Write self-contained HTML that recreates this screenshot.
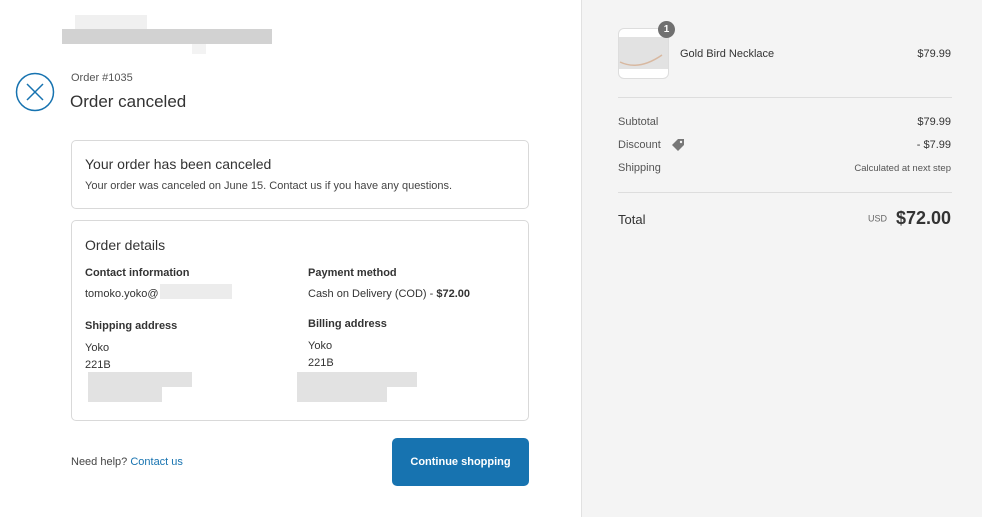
<!DOCTYPE html>
<html><head><meta charset="utf-8"><style>
*{margin:0;padding:0;box-sizing:border-box}
body{width:982px;height:517px;overflow:hidden;background:#fff;font-family:"Liberation Sans",sans-serif;color:#333;position:relative}
.a{position:absolute;white-space:nowrap}
.s{font-size:11px}
.b{font-weight:600}
.box{position:absolute;border:1px solid #d9d9d9;border-radius:5px;background:#fff}
.blk{position:absolute;background:#e2e2e2}
#right{position:absolute;left:581px;top:0;width:401px;height:517px;background:#f4f4f4;border-left:1px solid #e1e1e1}
.r{position:absolute;right:31px;white-space:nowrap;text-align:right}
</style></head><body>
<div class="blk" style="left:62px;top:29px;width:210px;height:15px;background:#d2d2d2"></div>
<div class="blk" style="left:75px;top:15px;width:72px;height:14px;background:#f0f0f0"></div>
<div class="blk" style="left:192px;top:44px;width:14px;height:10px;background:#f3f3f3"></div>

<svg class="a" style="left:15px;top:72px" width="40" height="40" viewBox="0 0 40 40"><circle cx="20" cy="20" r="18.5" fill="none" stroke="#1773b0" stroke-width="1.5"/><path d="M12 12L28 28M28 12L12 28" stroke="#1773b0" stroke-width="1.5"/></svg>
<div class="a s" style="left:71px;top:72px;color:#555">Order #1035</div>
<div class="a" style="left:70px;top:92px;font-size:17px;color:#333">Order canceled</div>

<div class="box" style="left:71px;top:140px;width:458px;height:69px"></div>
<div class="a" style="left:85px;top:156px;font-size:14px">Your order has been canceled</div>
<div class="a s" style="left:85px;top:180px;color:#444">Your order was canceled on June 15. Contact us if you have any questions.</div>

<div class="box" style="left:71px;top:220px;width:458px;height:201px"></div>
<div class="a" style="left:85px;top:237px;font-size:14px">Order details</div>
<div class="a s b" style="left:85px;top:267px">Contact information</div>
<div class="a s" style="left:85px;top:288px">tomoko.yoko@</div>
<div class="blk" style="left:160px;top:284px;width:72px;height:15px;background:#ececec"></div>
<div class="a s b" style="left:85px;top:320px">Shipping address</div>
<div class="a s" style="left:85px;top:342px">Yoko</div>
<div class="a s" style="left:85px;top:359px">221B</div>
<div class="blk" style="left:88px;top:372px;width:104px;height:15px"></div>
<div class="blk" style="left:88px;top:387px;width:74px;height:15px"></div>
<div class="a s b" style="left:308px;top:267px">Payment method</div>
<div class="a s" style="left:308px;top:288px">Cash on Delivery (COD) - <b>$72.00</b></div>
<div class="a s b" style="left:308px;top:318px">Billing address</div>
<div class="a s" style="left:308px;top:340px">Yoko</div>
<div class="a s" style="left:308px;top:357px">221B</div>
<div class="blk" style="left:297px;top:372px;width:120px;height:15px"></div>
<div class="blk" style="left:297px;top:387px;width:90px;height:15px"></div>

<div class="a s" style="left:71px;top:456px;color:#444">Need help? <span style="color:#1773b0">Contact us</span></div>
<div class="a" style="left:392px;top:438px;width:137px;height:48px;background:#1773b0;border-radius:5px;color:#fff;font-size:11px;font-weight:bold;text-align:center;line-height:48px">Continue shopping</div>

<div id="right">
<div class="a" style="left:36px;top:28px;width:51px;height:51px;border:1px solid #ddd;border-radius:6px;background:#fff;overflow:hidden">
<div style="position:absolute;left:0;top:8px;width:51px;height:32px;background:#e2e2e2"></div>
<svg style="position:absolute;left:0;top:0" width="51" height="51"><path d="M1 33 Q20 42 43 26" stroke="#d8b8a0" stroke-width="1.5" fill="none"/></svg>
</div>
<div class="a" style="left:76px;top:21px;width:17px;height:17px;border-radius:50%;background:#707070;color:#fff;font-size:10px;font-weight:bold;text-align:center;line-height:17px">1</div>
<div class="a s" style="left:98px;top:48px">Gold Bird Necklace</div>
<div class="r s" style="top:48px">$79.99</div>
<div class="a" style="left:36px;top:97px;width:334px;height:1px;background:#ddd"></div>
<div class="a s" style="left:36px;top:116px;color:#555">Subtotal</div>
<div class="r s" style="top:116px">$79.99</div>
<div class="a s" style="left:36px;top:139px;color:#555">Discount</div>
<svg class="a" style="left:89px;top:138px" width="14" height="14" viewBox="0 0 14 14"><path d="M1 7 L7 1 H13 V7 L7 13 Z" fill="#777"/><circle cx="10" cy="4" r="1.2" fill="#f4f4f4"/></svg>
<div class="r s" style="top:139px">- $7.99</div>
<div class="a s" style="left:36px;top:162px;color:#555">Shipping</div>
<div class="r" style="top:163px;font-size:9.5px;color:#555">Calculated at next step</div>
<div class="a" style="left:36px;top:192px;width:334px;height:1px;background:#ddd"></div>
<div class="a" style="left:36px;top:212px;font-size:13px">Total</div>
<div class="r" style="top:208px"><span style="font-size:9px;color:#666;vertical-align:middle">USD</span>&nbsp; <span style="font-size:18px;font-weight:bold;vertical-align:middle">$72.00</span></div>
</div>
</body></html>
